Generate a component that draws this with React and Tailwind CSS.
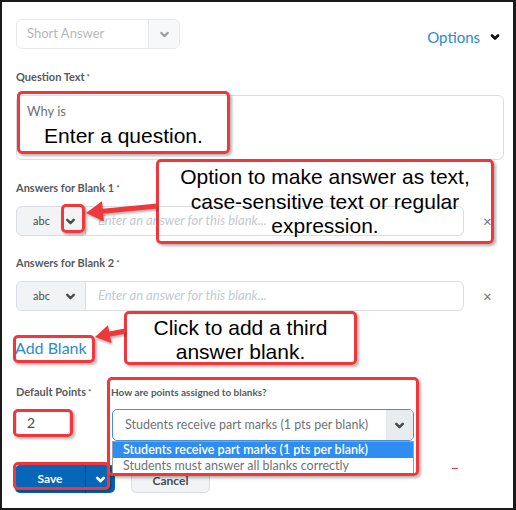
import React from 'react';

const Chevron = ({ className = '', sw = 2 }) => (
  <svg viewBox="0 0 12 12" className={className} fill="none" stroke="currentColor" strokeWidth={sw} strokeLinecap="round" strokeLinejoin="round">
    <path d="M3 4.5l3 3 3-3" />
  </svg>
);

const Label = ({ children, className = '' }) => (
  <div className={`text-[11px] leading-[14px] font-bold text-[#565a5c] ${className}`}>
    {children}
    <span className="text-[8px] align-top ml-[2px]">*</span>
  </div>
);

const BlankRow = ({ className = '' }) => (
  <div className={`flex items-center h-[30px] ${className}`}>
    <div className="flex items-center w-[70px] h-full bg-[#f1f3f5] border border-[#d9dde3] rounded-l-[6px]">
      <span className="ml-[16px] text-[11px] text-[#494c4e]">abc</span>
      <Chevron className="w-[13px] h-[13px] ml-[14px] text-[#494c4e]" sw={2.2} />
    </div>
    <div className="flex items-center w-[378px] h-full border border-l-0 border-[#d9dde3] rounded-r-[6px] pl-[12px] text-[13px] italic text-[#c4c9d0] whitespace-nowrap">
      Enter an answer for this blank...
    </div>
    <span className="ml-[19px] text-[15px] text-[#6e7376]">×</span>
  </div>
);

const redBox = 'absolute border-[3px] border-[#f0373c] rounded-[5px] shadow-[2px_2px_3px_rgba(0,0,0,0.3)]';
const callout = "font-['Liberation_Sans',Arial,sans-serif] text-[21px] text-black";

export default function App() {
  return (
    <div className="relative w-[516px] h-[510px] overflow-hidden bg-white font-['Lato',sans-serif]">
      <div className="pl-[16px] pr-[12px] pt-[19px]">
        {/* question type + options */}
        <div className="flex items-center justify-between">
          <div className="flex w-[164px] h-[30px] rounded-[6px] border border-[#e6e8ea]">
            <div className="flex-1 flex items-center pl-[10px] text-[13px] text-[#b5b8ba]">Short Answer</div>
            <div className="w-[31px] flex items-center justify-center bg-[#f7f8f9] border-l border-[#e6e8ea] rounded-r-[6px]">
              <Chevron className="w-[13px] h-[13px] text-[#a0a4a8]" />
            </div>
          </div>
          <div className="flex items-center gap-[9px] mt-[6px] mr-[3px]">
            <span className="text-[15px] text-[#2c8ad4]">Options</span>
            <Chevron className="w-[12px] h-[12px] text-[#111]" sw={2.6} />
          </div>
        </div>

        <Label className="mt-[21px]">Question Text</Label>
        <div className="mt-[11px] h-[65px] border border-[#d9dde3] rounded-[6px] pl-[10px] pt-[6px] text-[13px] text-[#6e7376]">
          Why is
        </div>

        <Label className="mt-[21px]">Answers for Blank 1</Label>
        <BlankRow className="mt-[11px]" />

        <Label className="mt-[20px]">Answers for Blank 2</Label>
        <BlankRow className="mt-[11px]" />

        <div className="mt-[27px] -ml-[1px] text-[16px] leading-[20px] text-[#2c8ad4]">Add Blank</div>

        {/* points */}
        <div className="flex mt-[27px]">
          <div className="w-[96px]">
            <Label>Default Points</Label>
            <div className="mt-[10px] w-[54px] h-[26px] border border-[#d9dde3] rounded-[5px] flex items-center pl-[10px] text-[14px] text-[#494c4e]">2</div>
          </div>
          <div className="w-[302px]">
            <div className="text-[10px] leading-[14px] font-bold text-[#565a5c] -ml-[1px]">How are points assigned to blanks?</div>
            <div className="relative mt-[10px] h-[32px] flex border border-[#4a8fd4] rounded-[5px]">
              <div className="flex-1 flex items-center pl-[12px] text-[12.5px] text-[#6e7376] whitespace-nowrap">Students receive part marks (1 pts per blank)</div>
              <div className="w-[27px] flex items-center justify-center bg-[#e9ecef] rounded-r-[4px]">
                <Chevron className="w-[13px] h-[13px] text-[#494c4e]" sw={2.4} />
              </div>
              <div className="absolute left-[-1px] right-[-1px] top-[31px] bg-white border border-[#9aa0a6] z-10">
                <div className="h-[16px] bg-[#2f8cf0] text-white text-[12.5px] leading-[16px] pl-[10px] font-semibold whitespace-nowrap">Students receive part marks (1 pts per blank)</div>
                <div className="h-[16px] text-[#6e7376] text-[12.5px] leading-[16px] pl-[10px] whitespace-nowrap">Students must answer all blanks correctly</div>
              </div>
            </div>
          </div>
        </div>

        {/* buttons */}
        <div className="flex mt-[24px] -ml-[1px]">
          <div className="flex w-[100px] h-[28px] bg-[#0866b8] rounded-[5px] text-white">
            <div className="w-[70px] flex items-center justify-center text-[12px] font-bold">Save</div>
            <div className="flex-1 flex items-center justify-center border-l border-[#054b8a]">
              <Chevron className="w-[13px] h-[13px]" sw={2.6} />
            </div>
          </div>
          <div className="ml-[16px] w-[79px] h-[28px] bg-[#f1f3f5] border border-[#d9dde3] rounded-[5px] flex items-end justify-center pb-[2px] text-[12px] font-bold text-[#494c4e]">
            Cancel
          </div>
        </div>
      </div>

      {/* annotations */}
      <div className={`${redBox} left-[17px] top-[91px] w-[213px] h-[63px]`}>
        <div className={`pt-[29px] text-center leading-[25px] ${callout}`}>Enter a question.</div>
      </div>
      <div className={`${redBox} left-[156px] top-[159px] w-[338px] h-[85px] flex flex-col items-center pt-[3px] leading-[24.5px] ${callout}`}>
        <span>Option to make answer as text,</span>
        <span>case-sensitive text or regular</span>
        <span>expression.</span>
      </div>
      <div className={`${redBox} left-[61px] top-[204px] w-[24px] h-[29px] rounded-[2px]`} />
      <div className={`${redBox} left-[124px] top-[311px] w-[233px] h-[54px] flex flex-col items-center pt-[2px] leading-[24px] ${callout}`}>
        <span>Click to add a third</span>
        <span>answer blank.</span>
      </div>
      <div className={`${redBox} left-[13px] top-[335px] w-[82px] h-[28px] rounded-[2px]`} />
      <div className={`${redBox} left-[13px] top-[409px] w-[60px] h-[28px] rounded-[2px]`} />
      <div className={`${redBox} left-[107px] top-[377px] w-[312px] h-[99px] rounded-[2px] z-20`} />
      <div className={`${redBox} left-[13px] top-[462px] w-[97px] h-[28px] rounded-[2px]`} />
      <div className="absolute left-[452px] top-[468px] w-[6px] h-[1px] bg-[#f0373c]" />

      <svg className="absolute inset-0 pointer-events-none drop-shadow-[1px_2px_1px_rgba(0,0,0,0.3)]" width="516" height="510" viewBox="0 0 516 510">
        <polygon fill="#f0373c" points="86,213 101.9,201.3 102.7,208.8 157,203.5 157.4,208.5 103.1,213.8 103.9,221.3" />
        <polygon fill="#f0373c" points="95,337 107.9,325.3 109.2,331.6 125,328.5 126,333.5 110.2,336.5 111.5,342.9" />
      </svg>

      {/* frame */}
      <div className="absolute inset-0 border-2 border-[#1a1a1a] border-r-[3px] pointer-events-none" />
    </div>
  );
}
